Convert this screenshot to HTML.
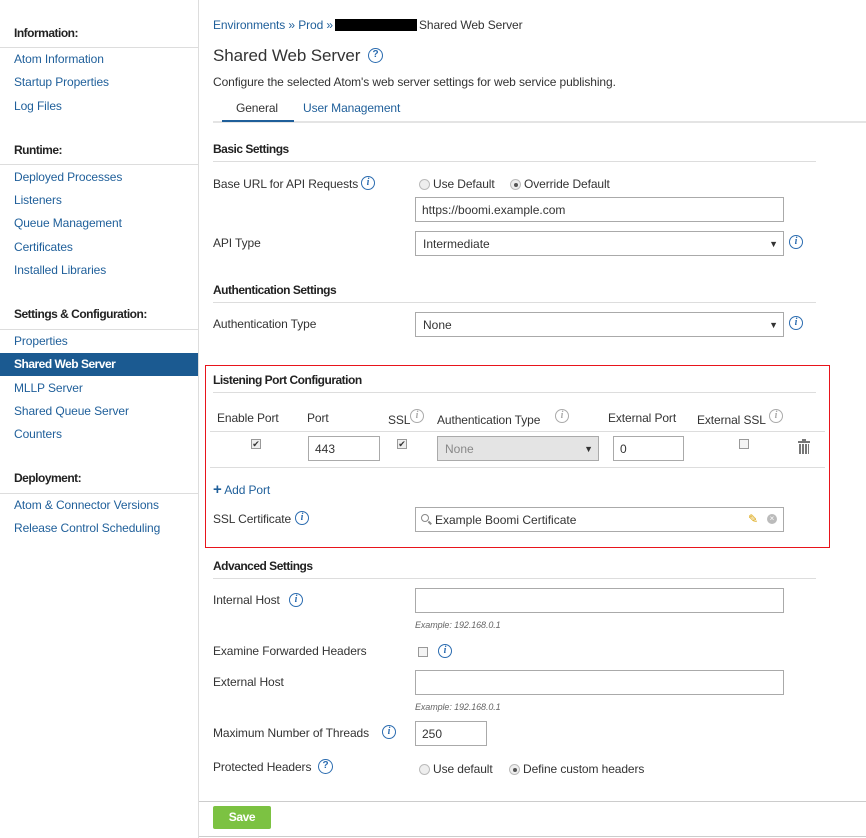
<!DOCTYPE html>
<html><head><meta charset="utf-8"><style>
*{box-sizing:border-box;margin:0;padding:0}
body{width:866px;height:838px;position:relative;background:#fff;font-family:"Liberation Sans",sans-serif;font-size:12px;color:#333;overflow:hidden}
.a{position:absolute;white-space:nowrap;line-height:16px;letter-spacing:-0.1px}
.lk{color:#1f5f9a}
.h{font-weight:bold;color:#222;letter-spacing:-0.5px}
.hl{position:absolute;height:1px;background:#ddd}
.in{position:absolute;border:1px solid #aaa;background:#fff;height:25px;padding:4px 6px;line-height:16px;font-size:12px}
.i{position:absolute;width:14px;height:14px;border:1.3px solid #2b6cb0;border-radius:50%;color:#2b6cb0;font:italic bold 10px "Liberation Serif",serif;text-align:center;line-height:12px}
.ig{border-color:#aaa;color:#aaa}
.q{position:absolute;width:15px;height:15px;border:1.5px solid #2b6cb0;border-radius:50%;color:#2b6cb0;font:bold 10px "Liberation Sans",sans-serif;text-align:center;line-height:12px}
.r{position:absolute;width:11px;height:11px;border:1px solid #bbb;border-radius:50%;background:#eee}
.r.on::after{content:"";position:absolute;left:2.5px;top:2.5px;width:4px;height:4px;border-radius:50%;background:#555}
.cb{position:absolute;width:10px;height:10px;border:1px solid #999;background:#eee;font-size:9px;line-height:8px;text-align:center;color:#333}
.sel::after{content:"▼";position:absolute;right:5px;top:4px;font-size:9px;color:#333}
</style></head><body>
<div style="position:absolute;left:198px;top:0;width:1px;height:838px;background:#ddd"></div>
<div class="a h" style="left:14px;top:25px">Information:</div>
<div class="hl" style="left:0;top:47px;width:198px"></div>
<div class="a lk" style="left:14px;top:51px">Atom Information</div>
<div class="a lk" style="left:14px;top:74px">Startup Properties</div>
<div class="a lk" style="left:14px;top:98px">Log Files</div>
<div class="a h" style="left:14px;top:142px">Runtime:</div>
<div class="hl" style="left:0;top:164px;width:198px"></div>
<div class="a lk" style="left:14px;top:169px">Deployed Processes</div>
<div class="a lk" style="left:14px;top:192px">Listeners</div>
<div class="a lk" style="left:14px;top:215px">Queue Management</div>
<div class="a lk" style="left:14px;top:239px">Certificates</div>
<div class="a lk" style="left:14px;top:262px">Installed Libraries</div>
<div class="a h" style="left:14px;top:306px">Settings &amp; Configuration:</div>
<div class="hl" style="left:0;top:329px;width:198px"></div>
<div class="a lk" style="left:14px;top:333px">Properties</div>
<div style="position:absolute;left:0;top:353px;width:198px;height:23px;background:#1b5a91"></div>
<div class="a" style="left:14px;top:356px;color:#fff;font-weight:bold;letter-spacing:-0.5px">Shared Web Server</div>
<div class="a lk" style="left:14px;top:380px">MLLP Server</div>
<div class="a lk" style="left:14px;top:403px">Shared Queue Server</div>
<div class="a lk" style="left:14px;top:426px">Counters</div>
<div class="a h" style="left:14px;top:470px">Deployment:</div>
<div class="hl" style="left:0;top:493px;width:198px"></div>
<div class="a lk" style="left:14px;top:497px">Atom &amp; Connector Versions</div>
<div class="a lk" style="left:14px;top:520px">Release Control Scheduling</div>

<div class="a lk" style="left:213px;top:17px">Environments » Prod »</div>
<div style="position:absolute;left:335px;top:19px;width:82px;height:12px;background:#000"></div>
<div class="a" style="left:419px;top:17px">Shared Web Server</div>
<div class="a" style="left:213px;top:45px;font-size:17px;line-height:22px;color:#333">Shared Web Server</div>
<div class="q" style="left:368px;top:48px">?</div>
<div class="a" style="left:213px;top:74px">Configure the selected Atom's web server settings for web service publishing.</div>
<div class="a" style="left:236px;top:100px">General</div>
<div class="a lk" style="left:303px;top:100px">User Management</div>
<div style="position:absolute;left:213px;top:121px;width:653px;height:2px;background:#e4e4e4"></div>
<div style="position:absolute;left:222px;top:120px;width:72px;height:2px;background:#1f5f9a"></div>

<div class="a h" style="left:213px;top:141px">Basic Settings</div>
<div class="hl" style="left:213px;top:161px;width:603px"></div>
<div class="a" style="left:213px;top:176px">Base URL for API Requests</div><div class="i" style="left:361px;top:176px">i</div>
<div class="r" style="left:419px;top:179px"></div><div class="a" style="left:433px;top:176px">Use Default</div>
<div class="r on" style="left:510px;top:179px"></div><div class="a" style="left:524px;top:176px">Override Default</div>
<div class="in" style="left:415px;top:197px;width:369px">https://boomi.example.com</div>
<div class="a" style="left:213px;top:235px">API Type</div>
<div class="in sel" style="left:415px;top:231px;width:369px;padding-left:7px">Intermediate</div>
<div class="i" style="left:789px;top:235px">i</div>

<div class="a h" style="left:213px;top:282px">Authentication Settings</div>
<div class="hl" style="left:213px;top:302px;width:603px"></div>
<div class="a" style="left:213px;top:316px">Authentication Type</div>
<div class="in sel" style="left:415px;top:312px;width:369px;padding-left:7px">None</div>
<div class="i" style="left:789px;top:316px">i</div>

<div style="position:absolute;left:205px;top:365px;width:625px;height:183px;border:1px solid #e8141b"></div>
<div class="a h" style="left:213px;top:372px">Listening Port Configuration</div>
<div class="hl" style="left:213px;top:392px;width:603px"></div>
<div class="a" style="left:217px;top:410px">Enable Port</div>
<div class="a" style="left:307px;top:410px">Port</div>
<div class="a" style="left:388px;top:412px">SSL</div><div class="i ig" style="left:410px;top:409px">i</div>
<div class="a" style="left:437px;top:412px">Authentication Type</div><div class="i ig" style="left:555px;top:409px">i</div>
<div class="a" style="left:608px;top:410px">External Port</div>
<div class="a" style="left:697px;top:412px">External SSL</div><div class="i ig" style="left:769px;top:409px">i</div>
<div class="hl" style="left:210px;top:431px;width:615px"></div>
<div class="cb" style="left:251px;top:439px">✔</div>
<div class="in" style="left:308px;top:436px;width:72px">443</div>
<div class="cb" style="left:397px;top:439px">✔</div>
<div class="in sel" style="left:437px;top:436px;width:162px;background:#e4e4e4;color:#888;padding-left:7px">None</div>
<div class="in" style="left:613px;top:436px;width:71px">0</div>
<div class="cb" style="left:739px;top:439px;background:#f4f4f4"></div>
<div style="position:absolute;left:798px;top:441px;width:12px;height:2px;background:#777"></div>
<div style="position:absolute;left:802px;top:439px;width:4px;height:2px;background:#777"></div>
<div style="position:absolute;left:799px;top:444px;width:10px;height:10px;background:repeating-linear-gradient(90deg,#777 0 2px,#fff 2px 3px)"></div>
<div class="hl" style="left:210px;top:467px;width:615px"></div>
<div class="a lk" style="left:213px;top:482px"><b style="font-size:15px">+</b> Add Port</div>
<div class="a" style="left:213px;top:511px">SSL Certificate</div><div class="i" style="left:295px;top:511px">i</div>
<div class="in" style="left:415px;top:507px;width:369px;padding-left:19px">Example Boomi Certificate</div>
<div style="position:absolute;left:421px;top:514px;width:8px;height:8px;border:1.5px solid #888;border-radius:50%"></div>
<div style="position:absolute;left:428px;top:522px;width:4px;height:1.5px;background:#888;transform:rotate(45deg)"></div>
<div class="a" style="left:748px;top:511px;color:#d9a000">✎</div>
<div style="position:absolute;left:767px;top:514px;width:10px;height:10px;border-radius:50%;background:#bbb;color:#fff;font-size:8px;line-height:10px;text-align:center">×</div>

<div class="a h" style="left:213px;top:558px">Advanced Settings</div>
<div class="hl" style="left:213px;top:578px;width:603px"></div>
<div class="a" style="left:213px;top:592px">Internal Host</div><div class="i" style="left:289px;top:593px">i</div>
<div class="in" style="left:415px;top:588px;width:369px"></div>
<div class="a" style="left:415px;top:617px;font-size:9px;font-style:italic;color:#666">Example: 192.168.0.1</div>
<div class="a" style="left:213px;top:643px">Examine Forwarded Headers</div>
<div class="cb" style="left:418px;top:647px;background:#f4f4f4"></div>
<div class="i" style="left:438px;top:644px">i</div>
<div class="a" style="left:213px;top:674px">External Host</div>
<div class="in" style="left:415px;top:670px;width:369px"></div>
<div class="a" style="left:415px;top:699px;font-size:9px;font-style:italic;color:#666">Example: 192.168.0.1</div>
<div class="a" style="left:213px;top:725px">Maximum Number of Threads</div><div class="i" style="left:382px;top:725px">i</div>
<div class="in" style="left:415px;top:721px;width:72px">250</div>
<div class="a" style="left:213px;top:759px">Protected Headers</div><div class="q" style="left:318px;top:759px">?</div>
<div class="r" style="left:419px;top:764px"></div><div class="a" style="left:433px;top:761px">Use default</div>
<div class="r on" style="left:509px;top:764px"></div><div class="a" style="left:523px;top:761px">Define custom headers</div>

<div class="hl" style="left:199px;top:801px;width:667px;background:#ccc"></div>
<div style="position:absolute;left:213px;top:806px;width:58px;height:23px;background:#7cc242;border-radius:2px;color:#fff;font-weight:bold;text-align:center;line-height:23px;letter-spacing:-0.4px">Save</div>
<div class="hl" style="left:199px;top:836px;width:667px;background:#ccc"></div>
</body></html>
